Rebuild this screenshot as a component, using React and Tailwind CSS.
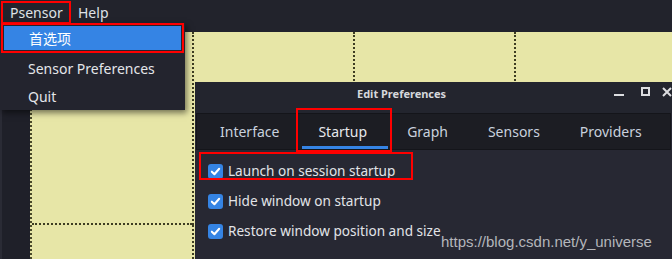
import React from 'react';

const font = { fontFamily: '"Noto Sans", "Noto Sans CJK SC", sans-serif' };

const Check = () => (
  <span className="w-[15px] h-[15px] rounded-[3px] bg-[#3584e4] flex items-center justify-center shrink-0">
    <svg width="11" height="11" viewBox="0 0 12 12">
      <path d="M2 6.2 L4.8 9 L10 3" stroke="#fff" strokeWidth="2.2" fill="none" strokeLinecap="round" strokeLinejoin="round" />
    </svg>
  </span>
);

const Desktop = () => (
  <div className="flex flex-col h-full">
    <div className="h-[32px] shrink-0 bg-[#22232c]" />
    <div className="flex flex-1">
      <div className="w-[30px] shrink-0 bg-[#1f2029] border-l-2 border-[#2a2b35]" />
      <div className="flex-1 min-w-0 bg-[#e7e6a7] border-l-2 border-dotted border-[#4a4a2a] grid grid-cols-[160px_161px_161px_161px] grid-rows-[193px_1fr]">
        {[0, 1, 2, 3].map((i) => (
          <div key={i} className={`border-b-2 border-dotted border-[#3d3d22] ${i > 0 ? 'border-l-2' : ''}`} />
        ))}
        {[0, 1, 2, 3].map((i) => (
          <div key={'b' + i} className={`border-dotted border-[#3d3d22] ${i > 0 ? 'border-l-2' : ''}`} />
        ))}
      </div>
    </div>
  </div>
);

const MenuBar = () => (
  <div className="absolute left-0 top-0 h-[24px] flex items-center text-[14px] text-[#dfe1e6]" style={font}>
    <div className="ml-[1px] w-[70px] h-[23px] border-2 border-[#ff0000] flex items-center pl-[7px]">Psensor</div>
    <div className="ml-[7px]">Help</div>
  </div>
);

const Dropdown = () => (
  <div className="absolute left-0 top-[23px] w-[185px] h-[87px] bg-[#23242e] shadow-[2px_3px_6px_rgba(0,0,0,0.5)] text-[14px] text-[#e4e6ea]" style={font}>
    <div className="ml-[1px] w-[183px] h-[30px] border-2 border-[#ff0000] p-[1px]">
      <div className="h-full bg-[#3584e4] flex items-center pl-[25px] text-white">首选项</div>
    </div>
    <div className="h-[28px] flex items-center pl-[28px] mt-[1px]">Sensor Preferences</div>
    <div className="h-[28px] flex items-center pl-[28px]">Quit</div>
  </div>
);

const tabs = ['Interface', 'Startup', 'Graph', 'Sensors', 'Providers'];

const Dialog = () => (
  <div className="absolute left-[195px] top-[82px] w-[485px] h-[180px] bg-[#272833] text-[#e2e4e8]" style={font}>
    <div className="h-[31px] bg-[#23252e] relative flex items-center">
      <div className="absolute left-[162px] top-[4px] text-[11px] font-bold text-[#d6d8dc]">Edit Preferences</div>
      <div className="absolute left-[419px] top-[12px] w-[10px] h-[2px] bg-[#dcdde0]" />
      <div className="absolute left-[446px] top-[5px] w-[9px] h-[9px] border-2 border-[#dcdde0]" />
      <svg className="absolute left-[467px] top-[5px]" width="10" height="10" viewBox="0 0 10 10">
        <path d="M1 1 L9 9 M9 1 L1 9" stroke="#dcdde0" strokeWidth="2" />
      </svg>
    </div>
    <div className="ml-[1px] w-[475px] h-[37px] bg-[#1c1d23] border border-[#14151a] flex items-stretch text-[14px] text-[#c9d1de]">
      {tabs.map((t, i) => (
        <div key={t} className={`relative flex items-center ${i === 0 ? 'pl-[23px] pr-[19px]' : 'px-[20px]'} ${t === 'Startup' ? 'text-[#e6e8ec]' : ''}`}>
          {t}
          {t === 'Startup' && (
            <>
              <div className="absolute left-[-2px] right-[-5px] top-[-6px] bottom-[-3px] border-2 border-[#ff0000]" />
              <div className="absolute left-[4px] right-[-1px] bottom-0 h-[3px] bg-[#3584e4]" />
            </>
          )}
        </div>
      ))}
    </div>
    <div className="pl-[13px] pt-[13px] flex flex-col gap-[14px] text-[13.6px]">
      {['Launch on session startup', 'Hide window on startup', 'Restore window position and size'].map((l) => (
        <div key={l} className="relative flex items-center gap-[5px] h-[16px]">
          <Check />
          <span>{l}</span>
          {l === 'Launch on session startup' && (
            <div className="absolute left-[-9px] w-[214px] top-[-11px] h-[28px] border-2 border-[#ff0000]" />
          )}
        </div>
      ))}
    </div>
  </div>
);

export default function App() {
  return (
    <div className="relative w-[672px] h-[259px] overflow-hidden bg-[#22232c]">
      <Desktop />
      <MenuBar />
      <Dropdown />
      <Dialog />
      <div className="absolute left-[441px] top-[231px] text-[15px] text-[#b4b6bb]" style={{ fontFamily: '"Liberation Sans", Arial, sans-serif' }}>
        https://blog.csdn.net/y_universe
      </div>
    </div>
  );
}
